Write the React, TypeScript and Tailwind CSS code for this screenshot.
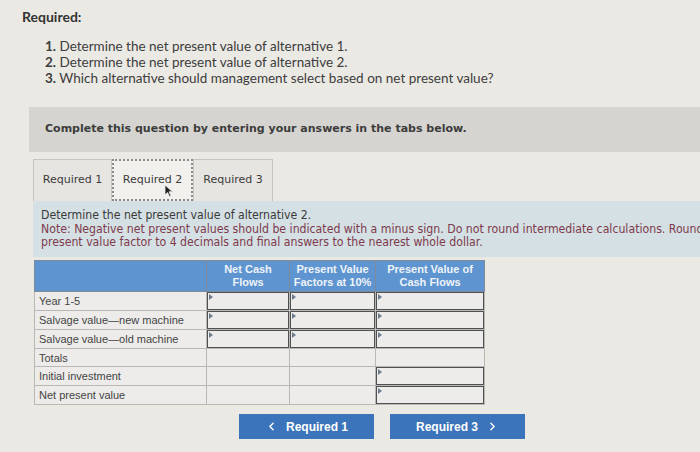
import { ChevronLeft, ChevronRight } from 'lucide-react';

const rows = [
  { label: 'Year 1-5', inputs: [true, true, true] },
  { label: 'Salvage value\u2014new machine', inputs: [true, true, true] },
  { label: 'Salvage value\u2014old machine', inputs: [true, true, true] },
  { label: 'Totals', inputs: [false, false, false] },
  { label: 'Initial investment', inputs: [false, false, true] },
  { label: 'Net present value', inputs: [false, false, true] },
];

function InputCell({ active }: { active: boolean }) {
  if (!active) {
    return <td className="h-[18px] border border-[#b9b8b4] p-0" />;
  }
  return (
    <td className="h-[18px] border border-[#b9b8b4] p-0">
      <div className="relative h-[18px] border-[1.5px] border-[#4f5052] bg-[#edecea]">
        <span className="absolute left-[1px] top-[1px] h-0 w-0 border-y-[3px] border-l-[4px] border-y-transparent border-l-[#6b7c8f]" />
      </div>
    </td>
  );
}

export default function App() {
  return (
    <div className="relative h-[452px] w-[700px] overflow-hidden bg-[#ebe9e4] text-[#3a3a3a]">
      <div className="pl-[22px] pt-[6px] font-['Lato',sans-serif] text-[14px] font-bold text-[#333]">
        Required:
      </div>

      <ol className="mt-[11px] pl-[45px] font-['Lato',sans-serif] text-[13.5px] leading-[16px] text-[#3d3d3d]">
        <li><span className="font-bold">1.</span> Determine the net present value of alternative 1.</li>
        <li><span className="font-bold">2.</span> Determine the net present value of alternative 2.</li>
        <li><span className="font-bold">3.</span> Which alternative should management select based on net present value?</li>
      </ol>

      {/* Instruction band */}
      <div className="ml-[29px] mt-[21px] flex h-[45px] items-center bg-[#d5d4d0] pl-[16px] font-['DejaVu_Sans',sans-serif] text-[11px] font-bold text-[#3c3c3c]">
        Complete this question by entering your answers in the tabs below.
      </div>

      <div className="ml-[33px] mt-[7px] w-[720px]">
        {/* Tabs */}
        <div className="flex h-[42px] font-['DejaVu_Sans',sans-serif] text-[11px] text-[#3c3c3c]">
          <div className="flex w-[79px] items-center justify-center border border-b-0 border-[#c5c4c0] bg-[#e6e5e1]">
            Required 1
          </div>
          <div className="flex w-[81px] items-center justify-center border-2 border-dotted border-[#8a8a8a] bg-[#f1f0ec]">
            Required 2
          </div>
          <div className="flex w-[80px] items-center justify-center border border-b-0 border-[#c5c4c0] bg-[#e6e5e1]">
            Required 3
          </div>
        </div>

        {/* Panel */}
        <div className="h-[56px] bg-[#d4e0e3] pl-[8px] pt-[8px] font-['DejaVu_Sans_Condensed','DejaVu_Sans',sans-serif] text-[12.2px] leading-[13.5px] whitespace-nowrap">
          <div className="text-[#3a3a3a]">Determine the net present value of alternative 2.</div>
          <div className="text-[#7e3b4d]">
            Note: Negative net present values should be indicated with a minus sign. Do not round intermediate calculations. Round the
            <br />
            present value factor to 4 decimals and final answers to the nearest whole dollar.
          </div>
        </div>

        {/* Table */}
        <table className="ml-[1px] mt-[3px] w-[450px] table-fixed border-collapse font-['Liberation_Sans',sans-serif] text-[11px]">
          <colgroup>
            <col className="w-[172px]" />
            <col className="w-[83px]" />
            <col className="w-[86px]" />
            <col className="w-[109px]" />
          </colgroup>
          <thead>
            <tr className="h-[31px] bg-[#5e95d0] text-center font-bold leading-[13px] text-[#eef3f8]">
              <th className="border border-[#7d8a99]" />
              <th className="border border-[#7d8a99] font-bold">Net Cash<br />Flows</th>
              <th className="border border-[#7d8a99] font-bold">Present Value<br />Factors at 10%</th>
              <th className="border border-[#7d8a99] font-bold">Present Value of<br />Cash Flows</th>
            </tr>
          </thead>
          <tbody className="bg-[#edecea]">
            {rows.map((r) => (
              <tr key={r.label} className="h-[18px]">
                <td className="border border-[#b9b8b4] px-[4px] leading-[16px] text-[#444]">{r.label}</td>
                {r.inputs.map((on, i) => (
                  <InputCell key={i} active={on} />
                ))}
              </tr>
            ))}
          </tbody>
        </table>

        {/* Nav buttons */}
        <div className="ml-[206px] mt-[9px] flex gap-[16px] font-['Liberation_Sans',sans-serif] text-[12px] font-bold text-white">
          <button className="flex h-[25px] w-[135px] items-center justify-center gap-[8px] bg-[#3b74ba]">
            <ChevronLeft className="h-[13px] w-[13px]" strokeWidth={2.5} />
            Required 1
          </button>
          <button className="flex h-[25px] w-[135px] items-center justify-center gap-[8px] bg-[#3b74ba]">
            Required 3
            <ChevronRight className="h-[13px] w-[13px]" strokeWidth={2.5} />
          </button>
        </div>
      </div>

      {/* Mouse cursor over tab */}
      <svg className="absolute left-[164px] top-[184px]" width="9" height="13" viewBox="0 0 9 13">
        <path d="M1 1 L1 11 L3.5 8.5 L5.5 12.5 L7 11.8 L5 7.8 L8.5 7.8 Z" fill="#222" stroke="#eee" strokeWidth="0.8" />
      </svg>
    </div>
  );
}
